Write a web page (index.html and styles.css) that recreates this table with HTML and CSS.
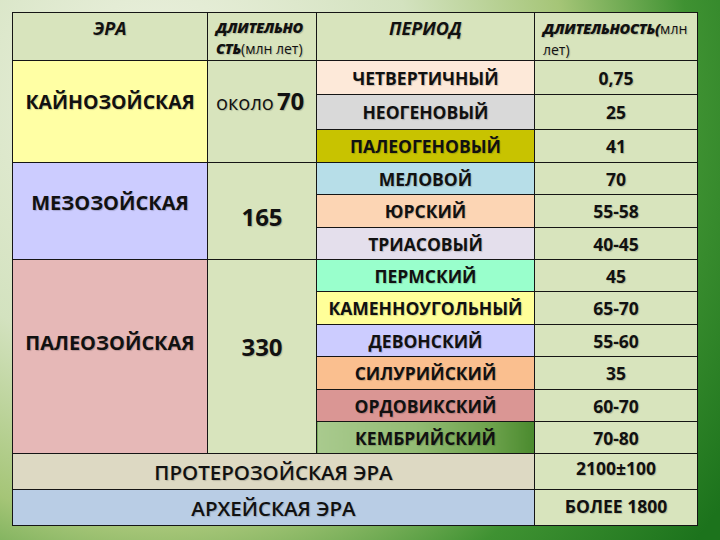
FILE: index.html
```html
<!DOCTYPE html>
<html lang="ru">
<head>
<meta charset="utf-8">
<title>Геохронологическая таблица</title>
<link rel="stylesheet" href="styles.css">
</head>
<body>
<main class="page">
<table class="geo">
  <colgroup>
    <col class="c-era"><col class="c-dur"><col class="c-per"><col class="c-val">
  </colgroup>
  <tr class="head">
    <th class="h-era">ЭРА</th>
    <th class="h-dur"><b>ДЛИТЕЛЬНО<br>СТЬ</b><span class="reg">(млн лет)</span></th>
    <th class="h-per">ПЕРИОД</th>
    <th class="h-val"><b>ДЛИТЕЛЬНОСТЬ(</b><span class="reg">млн<br>лет)</span></th>
  </tr>
  <tr class="r34">
    <td rowspan="3" class="era kz">КАЙНОЗОЙСКАЯ</td>
    <td rowspan="3" class="dur kz-d"><span class="reg-big">около</span><b class="num num-gap">70</b></td>
    <td class="per p-q">ЧЕТВЕРТИЧНЫЙ</td>
    <td class="val">0,75</td>
  </tr>
  <tr class="r35">
    <td class="per p-n">НЕОГЕНОВЫЙ</td>
    <td class="val">25</td>
  </tr>
  <tr class="r33">
    <td class="per p-pg">ПАЛЕОГЕНОВЫЙ</td>
    <td class="val">41</td>
  </tr>
  <tr class="r32">
    <td rowspan="3" class="era mz">МЕЗОЗОЙСКАЯ</td>
    <td rowspan="3" class="dur mz-d"><b class="num">165</b></td>
    <td class="per p-k">МЕЛОВОЙ</td>
    <td class="val">70</td>
  </tr>
  <tr class="r33">
    <td class="per p-j">ЮРСКИЙ</td>
    <td class="val">55-58</td>
  </tr>
  <tr class="r32">
    <td class="per p-t">ТРИАСОВЫЙ</td>
    <td class="val">40-45</td>
  </tr>
  <tr class="r32">
    <td rowspan="6" class="era pz">ПАЛЕОЗОЙСКАЯ</td>
    <td rowspan="6" class="dur pz-d"><b class="num">330</b></td>
    <td class="per p-p">ПЕРМСКИЙ</td>
    <td class="val">45</td>
  </tr>
  <tr class="r33">
    <td class="per p-c">КАМЕННОУГОЛЬНЫЙ</td>
    <td class="val">65-70</td>
  </tr>
  <tr class="r32">
    <td class="per p-d">ДЕВОНСКИЙ</td>
    <td class="val">55-60</td>
  </tr>
  <tr class="r33">
    <td class="per p-s">СИЛУРИЙСКИЙ</td>
    <td class="val">35</td>
  </tr>
  <tr class="r32">
    <td class="per p-o">ОРДОВИКСКИЙ</td>
    <td class="val">60-70</td>
  </tr>
  <tr class="r32">
    <td class="per p-cm">КЕМБРИЙСКИЙ</td>
    <td class="val">70-80</td>
  </tr>
  <tr class="r36">
    <td colspan="3" class="wide pr">ПРОТЕРОЗОЙСКАЯ ЭРА</td>
    <td class="val v-up">2100±100</td>
  </tr>
  <tr class="r36">
    <td colspan="3" class="wide ar">АРХЕЙСКАЯ ЭРА</td>
    <td class="val v-up2">БОЛЕЕ 1800</td>
  </tr>
</table>
</main>
</body>
</html>
```
FILE: styles.css
```css
html, body {
  margin: 0;
  padding: 0;
}
body {
  width: 720px;
  height: 540px;
  overflow: hidden;
  background:
    radial-gradient(684px 720px at 158px 97px, #eef2e2 0%, #d3e2bf 38%, #a5c577 60%, #3f9232 78%, #1c731c 100%);
  font-family: "Open Sans", "Noto Sans", sans-serif;
  color: #111;
}
.page {
  padding: 12px;
}
.geo {
  border-collapse: collapse;
  table-layout: fixed;
  width: 685px;
  text-shadow: 1px 1px 1px rgba(0, 0, 0, 0.18);
}
.c-era { width: 195px; }
.c-dur { width: 109px; }
.c-per { width: 218px; }
.c-val { width: 163px; }

th, td {
  border: 1px solid #151515;
  padding: 0;
  background: #d8e4bd;
}

.head { height: 48px; }
.r32 { height: 32px; }
.r33 { height: 33px; }
.r34 { height: 34px; }
.r35 { height: 35px; }
.r36 { height: 36px; }

.head th {
  vertical-align: top;
  font-style: italic;
  font-weight: 700;
}
.h-era {
  font-size: 18px;
  line-height: 24px;
  text-align: center;
  padding-top: 3px;
}
.h-per {
  font-size: 18px;
  line-height: 24px;
  text-align: center;
  padding-top: 3px;
}
.h-dur, .h-val {
  text-align: left;
  font-size: 14.5px;
  line-height: 21px;
  padding: 4px 0 0 8px;
  letter-spacing: -0.3px;
}
.h-val { padding-top: 5px; }
.reg {
  font-style: normal;
  font-weight: 400;
  font-size: 14px;
  letter-spacing: 0;
}

.era {
  vertical-align: top;
  text-align: center;
  font-weight: 700;
  font-size: 19.5px;
  line-height: 24px;
}
.kz { background: #ffffa4; padding-top: 29px; }
.mz { background: #ccccff; padding-top: 28px; font-size: 20px; }
.pz { background: #e6b8b7; padding-top: 71px; font-size: 20px; }

.dur {
  vertical-align: top;
  text-align: center;
  line-height: 28px;
}
.kz-d { padding-top: 26px; text-align: left; padding-left: 8px; }
.mz-d { padding-top: 40px; }
.pz-d { padding-top: 73px; }
.reg-big {
  font-size: 20px;
  font-weight: 400;
}
.num {
  font-size: 24px;
  font-weight: 700;
}
.num-gap { margin-left: 3px; }

.per {
  text-align: center;
  vertical-align: middle;
  font-weight: 700;
  font-size: 17.5px;
  line-height: 20px;
}
.p-q  { background: #fde9d9; }
.p-n  { background: #d9d9d9; }
.p-pg { background: #c8c300; }
.p-k  { background: #b7dee8; }
.p-j  { background: #fcd5b4; }
.p-t  { background: #e4dfec; }
.p-p  { background: #99ffcc; }
.p-c  { background: #ffff99; }
.p-d  { background: #ccccff; }
.p-s  { background: #fabf8f; }
.p-o  { background: #da9694; }
.p-cm { background: linear-gradient(to right, #a9ca8e 0%, #93bc74 45%, #6da24c 80%, #4a8a2e 100%); }

.val {
  text-align: center;
  vertical-align: middle;
  font-weight: 700;
  font-size: 17.5px;
  line-height: 20px;
}
.v-up { padding-bottom: 7px; }
.v-up2 { padding-bottom: 3px; }

.wide {
  text-align: center;
  vertical-align: middle;
  font-weight: 600;
  font-size: 20.5px;
}
.pr { background: #ddd9c3; }
.ar { background: #b9cde5; }
```
